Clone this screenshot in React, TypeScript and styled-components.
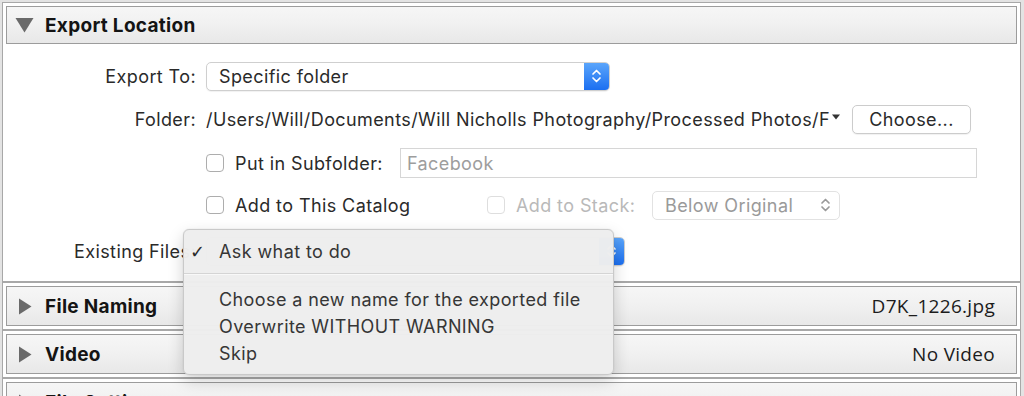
import React from "react";
import styled, { createGlobalStyle, css } from "styled-components";

const GlobalStyle = createGlobalStyle`
  html, body { margin: 0; padding: 0; background: #ffffff; overflow: hidden; }
  body { font-family: Inter, "Liberation Sans", sans-serif; -webkit-font-smoothing: antialiased; }
  * { box-sizing: border-box; }
`;

const uiFont = css`
  font-family: Inter, "Liberation Sans", sans-serif;
  font-size: 18px;
  letter-spacing: 0.4px;
`;

const Page = styled.div`
  position: relative;
  width: 1024px;
  height: 396px;
  overflow: hidden;
  background: #e3e3e3;
  padding: 2px 3px 0 2px;
`;

const Frame = styled.section`
  background: #ffffff;
  border: 1px solid #a8a8a8;
  padding: 3px;
`;

const Header = styled.div<{ $h: number }>`
  height: ${(p) => p.$h}px;
  display: flex;
  align-items: center;
  padding: 0 21px 0 8px;
  border: 1px solid #9c9c9c;
  background: linear-gradient(#f6f6f6 0%, #f1f1f1 45%, #e8e8e8 100%);
`;

const ArrowBox = styled.span`
  width: 19px;
  height: 18px;
  display: flex;
  align-items: center;
  justify-content: center;
  margin-right: 11px;
`;

const Title = styled.span`
  font-family: Inter, "Liberation Sans", sans-serif;
  font-weight: 700;
  font-size: 19px;
  color: #141414;
  letter-spacing: 0.3px;
`;

const Summary = styled.span`
  margin-left: auto;
  font-family: "Open Sans", "Liberation Sans", sans-serif;
  font-size: 19px;
  letter-spacing: 0.3px;
  color: #1c1c1c;
`;

const Body = styled.div`
  padding: 17px 0 12px 0;
  display: flex;
  flex-direction: column;
`;

const Row = styled.div<{ $mt?: number }>`
  display: grid;
  grid-template-columns: 190px 1fr;
  column-gap: 10px;
  align-items: center;
  height: 30px;
  margin-top: ${(p) => p.$mt ?? 0}px;
`;

const Label = styled.span`
  ${uiFont};
  text-align: right;
  color: #2a2a2a;
  white-space: nowrap;
`;

const Content = styled.div`
  display: flex;
  align-items: center;
  height: 100%;
`;

const Text = styled.span<{ $dim?: boolean }>`
  ${uiFont};
  color: ${(p) => (p.$dim ? "#b9b9b9" : "#2a2a2a")};
  white-space: nowrap;
`;

const Select = styled.div<{ $w: number; $disabled?: boolean }>`
  width: ${(p) => p.$w}px;
  height: 29px;
  display: flex;
  align-items: center;
  border: 1px solid ${(p) => (p.$disabled ? "#e2e2e2" : "#cfcfcf")};
  border-radius: 5px;
  background: #ffffff;
  box-shadow: ${(p) => (p.$disabled ? "none" : "0 1px 1px rgba(0,0,0,0.06)")};
  overflow: hidden;
`;

const SelectText = styled.span<{ $dim?: boolean }>`
  ${uiFont};
  flex: 1;
  padding-left: 12px;
  color: ${(p) => (p.$dim ? "#9a9a9a" : "#2a2a2a")};
  white-space: nowrap;
`;

const Stepper = styled.span<{ $blue?: boolean }>`
  width: ${(p) => (p.$blue ? 25 : 28)}px;
  height: 100%;
  display: flex;
  align-items: center;
  justify-content: center;
  background: ${(p) => (p.$blue ? "linear-gradient(#5aa5fb, #1b6ff1)" : "transparent")};
`;

const PathCell = styled.div`
  width: 634px;
  flex: none;
  display: flex;
  align-items: center;
  height: 100%;
  overflow: hidden;
`;

const PathText = styled.span`
  ${uiFont};
  color: #2a2a2a;
  white-space: nowrap;
`;

const PathCaret = styled.span`
  align-self: flex-start;
  margin-top: 10px;
  margin-left: 2px;
  display: flex;
`;

const Button = styled.div`
  ${uiFont};
  margin-left: 12px;
  width: 119px;
  height: 29px;
  border: 1px solid #cccccc;
  border-radius: 5px;
  background: #ffffff;
  box-shadow: 0 1px 1px rgba(0,0,0,0.06);
  display: flex;
  align-items: center;
  justify-content: center;
  color: #2a2a2a;
`;

const Check = styled.span<{ $disabled?: boolean }>`
  width: 18px;
  height: 18px;
  border: 1px solid ${(p) => (p.$disabled ? "#dedede" : "#adadad")};
  border-radius: 4px;
  background: #ffffff;
  margin-right: 11px;
  flex: none;
`;

const Cell = styled.div<{ $w: number }>`
  width: ${(p) => p.$w}px;
  display: flex;
  align-items: center;
  flex: none;
`;

const Field = styled.div`
  ${uiFont};
  width: 577px;
  height: 30px;
  border: 1px solid #d6d6d6;
  display: flex;
  align-items: center;
  padding-left: 6px;
  color: #9d9d9d;
`;

const StackCell = styled.div`
  display: flex;
  align-items: center;
  width: 165px;
  flex: none;
`;

const Menu = styled.div`
  position: absolute;
  left: 183px;
  top: 229px;
  width: 431px;
  padding: 8px 0 7px 0;
  background: rgba(238, 238, 238, 0.98);
  border: 1px solid #c9c9c9;
  border-radius: 6px;
  box-shadow: 0 6px 16px rgba(0,0,0,0.18), 0 0 1px rgba(0,0,0,0.2);
`;

const MenuItem = styled.div`
  ${uiFont};
  display: grid;
  grid-template-columns: 35px 1fr;
  align-items: center;
  height: 27px;
  color: #363636;
  white-space: nowrap;
`;

const Tick = styled.span`
  padding-left: 6px;
  font-family: "DejaVu Sans", sans-serif;
  font-size: 18px;
  letter-spacing: 0;
  color: #2a2a2a;
`;

const Separator = styled.div`
  height: 1px;
  margin: 8px 0 12px 0;
  background: #d4d4d4;
  box-shadow: 0 1px 0 #f8f8f8;
`;

const DownTriangle = () => (
  <svg width="19" height="16" viewBox="0 0 19 16">
    <polygon points="0.5,1 18.5,1 9.5,15.5" fill="#6a6a6a" />
  </svg>
);

const RightTriangle = () => (
  <svg width="14" height="17" viewBox="0 0 14 17">
    <polygon points="1,0.5 13.5,8.5 1,16.5" fill="#6a6a6a" />
  </svg>
);

const Chevrons = ({ color }: { color: string }) => (
  <svg width="11" height="18" viewBox="0 0 11 18">
    <path d="M2 7 L5.5 3.5 L9 7 M2 11 L5.5 14.5 L9 11" stroke={color} strokeWidth="1.7" fill="none" strokeLinecap="round" strokeLinejoin="round" />
  </svg>
);

const Caret = () => (
  <svg width="8" height="6" viewBox="0 0 8 6">
    <polygon points="0,0.5 8,0.5 4,5.5" fill="#333" />
  </svg>
);

const Section = ({ title, open, summary, children }: { title: string; open?: boolean; summary?: string; children?: React.ReactNode }) => (
  <Frame>
    <Header $h={open ? 38 : 40}>
      <ArrowBox>{open ? <DownTriangle /> : <RightTriangle />}</ArrowBox>
      <Title>{title}</Title>
      {summary && <Summary>{summary}</Summary>}
    </Header>
    {children}
  </Frame>
);

export default function App() {
  return (
    <Page>
      <GlobalStyle />
      <Section title="Export Location" open>
        <Body>
          <Row>
            <Label>Export To:</Label>
            <Content>
              <Select $w={404}>
                <SelectText>Specific folder</SelectText>
                <Stepper $blue><Chevrons color="#ffffff" /></Stepper>
              </Select>
            </Content>
          </Row>
          <Row $mt={13}>
            <Label>Folder:</Label>
            <Content>
              <PathCell>
                <PathText>/Users/Will/Documents/Will Nicholls Photography/Processed Photos/F</PathText>
                <PathCaret><Caret /></PathCaret>
              </PathCell>
              <Button>Choose...</Button>
            </Content>
          </Row>
          <Row $mt={14}>
            <Label />
            <Content>
              <Cell $w={194}>
                <Check />
                <Text>Put in Subfolder:</Text>
              </Cell>
              <Field>Facebook</Field>
            </Content>
          </Row>
          <Row $mt={12}>
            <Label />
            <Content>
              <Cell $w={281}>
                <Check />
                <Text>Add to This Catalog</Text>
              </Cell>
              <StackCell>
                <Check $disabled />
                <Text $dim>Add to Stack:</Text>
              </StackCell>
              <Select $w={188} $disabled>
                <SelectText $dim>Below Original</SelectText>
                <Stepper><Chevrons color="#9a9a9a" /></Stepper>
              </Select>
            </Content>
          </Row>
          <Row $mt={16}>
            <Label>Existing Files:</Label>
            <Content>
              <Select $w={419}>
                <SelectText>Ask what to do</SelectText>
                <Stepper $blue><Chevrons color="#ffffff" /></Stepper>
              </Select>
            </Content>
          </Row>
        </Body>
      </Section>
      <Section title="File Naming" summary="D7K_1226.jpg" />
      <Section title="Video" summary="No Video" />
      <Section title="File Settings" summary="JPEG (100%), sRGB" />
      <Menu>
        <MenuItem><Tick>✓</Tick><span>Ask what to do</span></MenuItem>
        <Separator />
        <MenuItem><span /><span>Choose a new name for the exported file</span></MenuItem>
        <MenuItem><span /><span>Overwrite WITHOUT WARNING</span></MenuItem>
        <MenuItem><span /><span>Skip</span></MenuItem>
      </Menu>
    </Page>
  );
}
